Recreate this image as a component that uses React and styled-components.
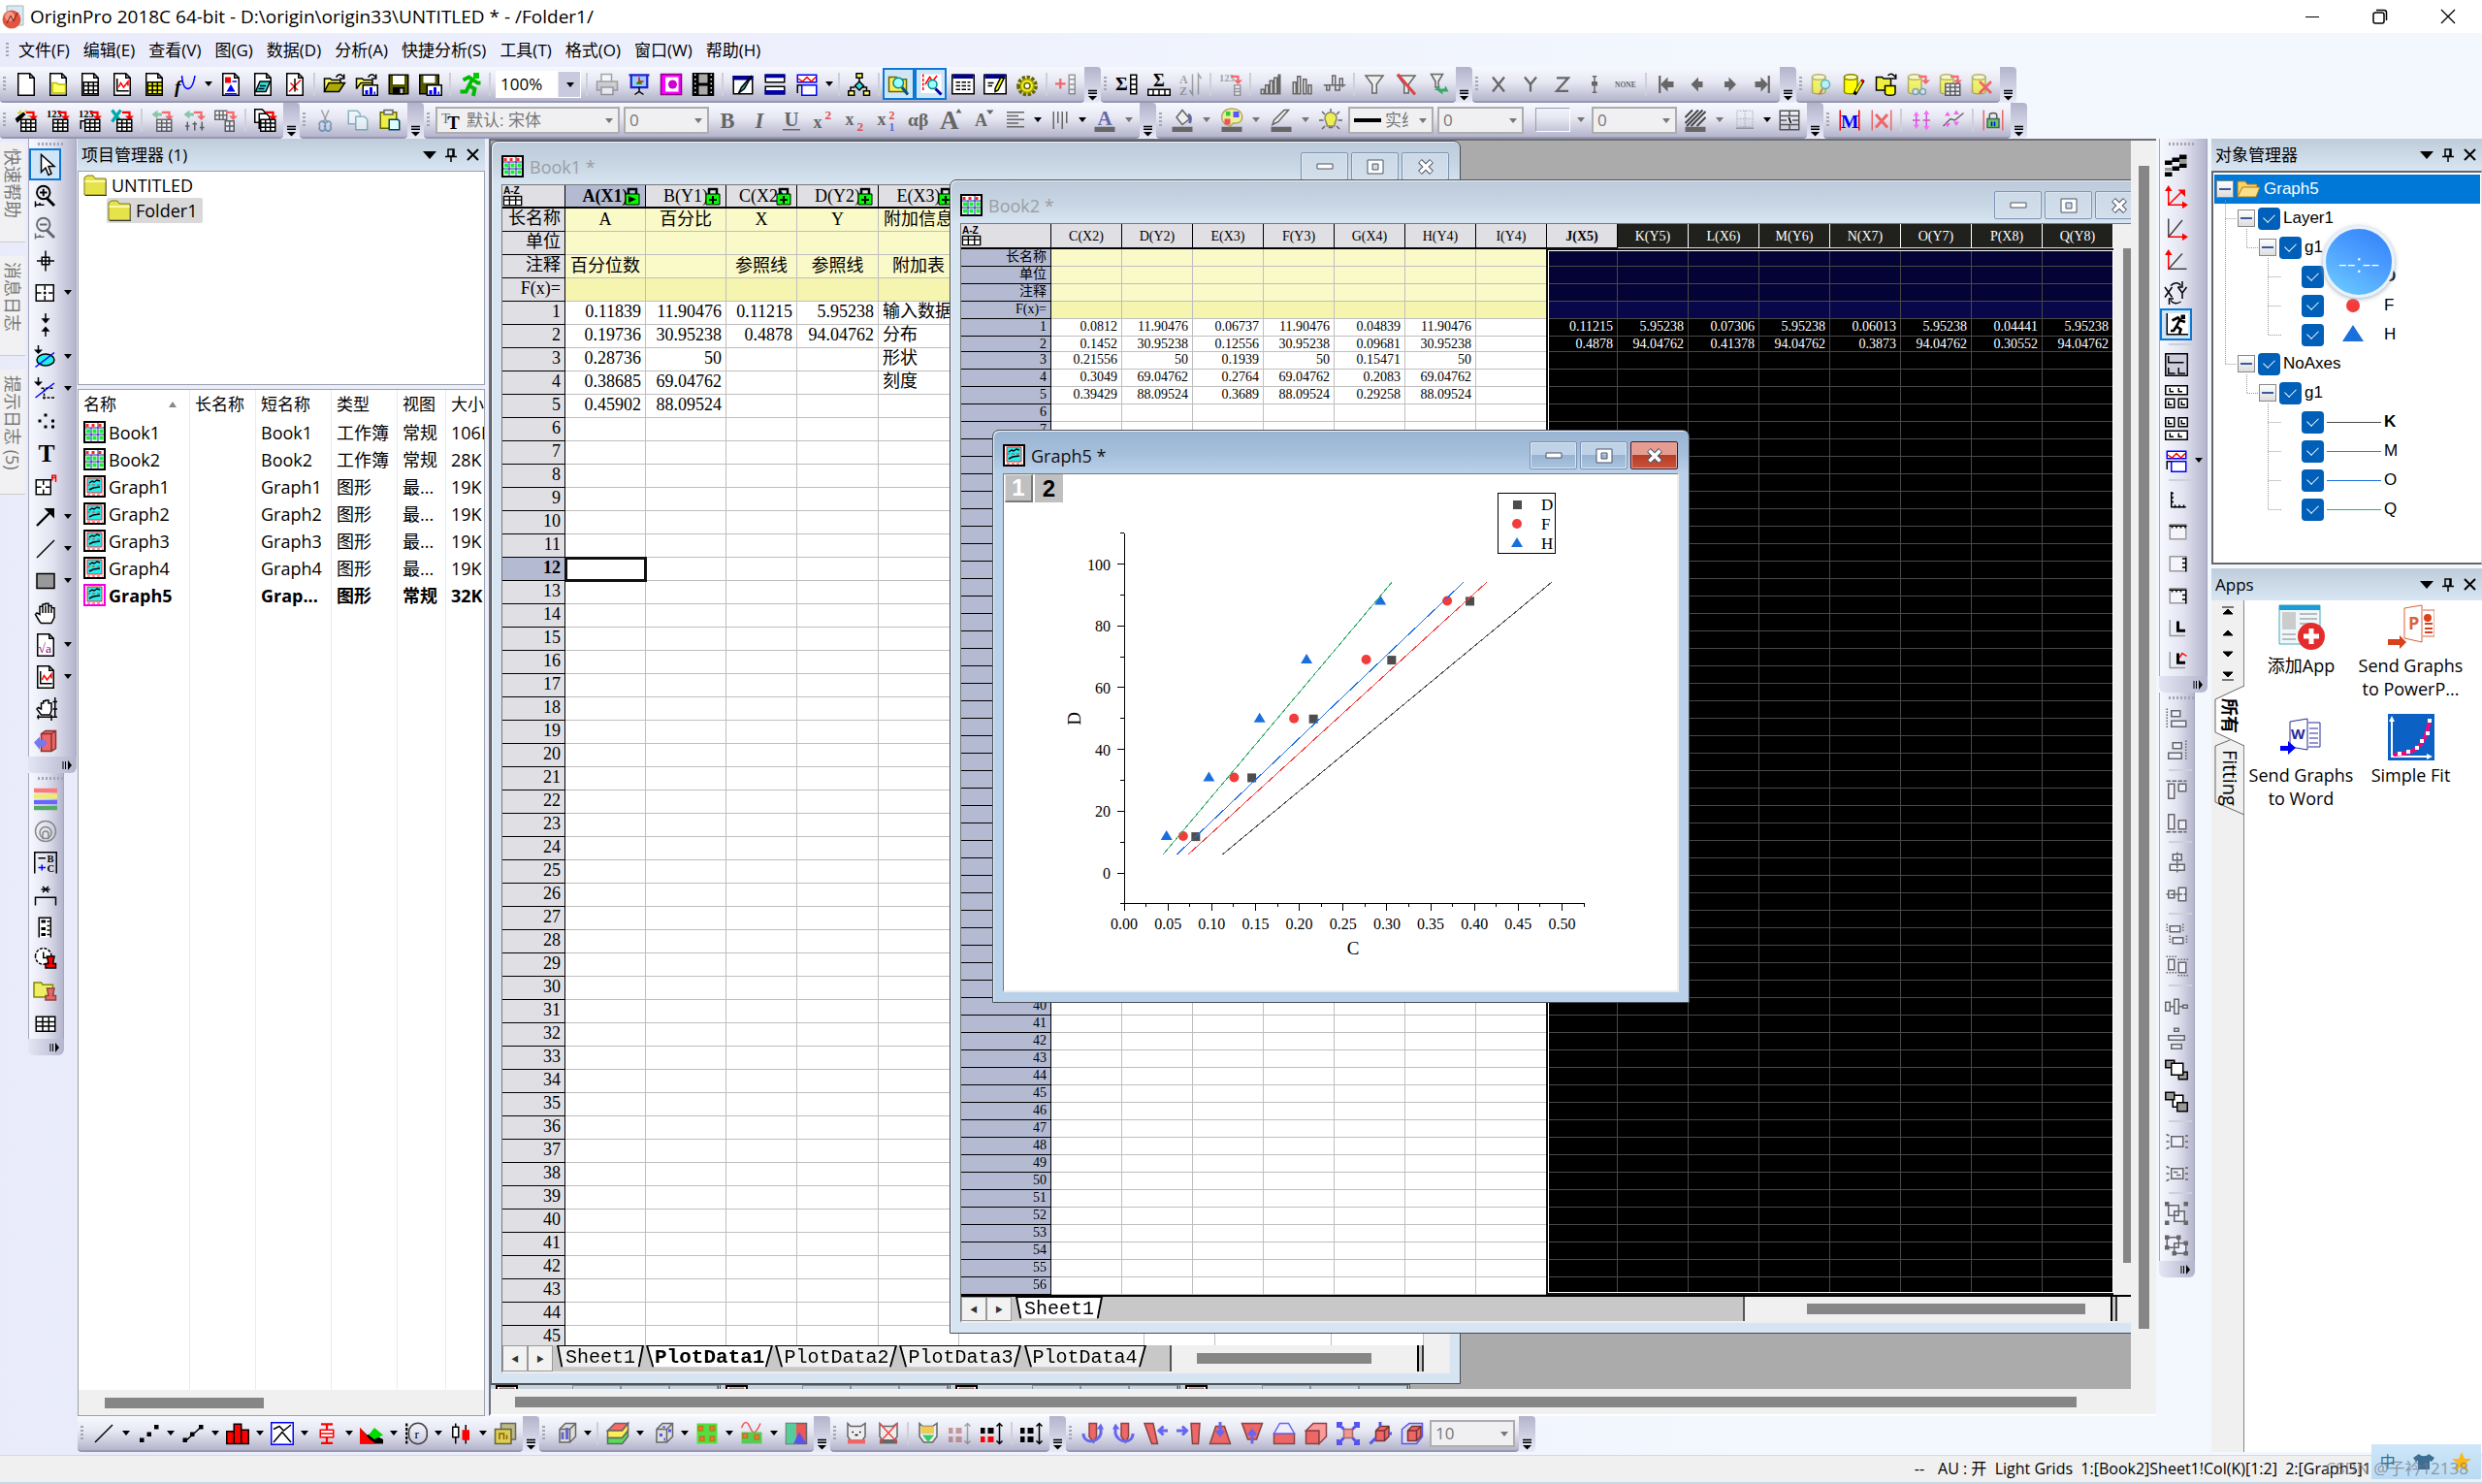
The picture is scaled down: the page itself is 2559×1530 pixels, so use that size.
import React, { useState } from "react"
import styled, { createGlobalStyle, css } from "styled-components"

const ui = `"Open Sans", "Noto Sans CJK SC", sans-serif`
const song = `"Liberation Serif", "Noto Sans CJK SC", serif`

const GlobalStyle = createGlobalStyle`
  * {
    box-sizing: border-box;
  }
  body {
    margin: 0;
    font: 18px/24px ${ui};
    color: #000;
  }
  button, select, input {
    font: inherit;
    color: inherit;
    margin: 0;
    padding: 0;
  }
  button {
    border: 0;
    background: none;
  }
  table {
    border-spacing: 0;
  }
  th, td {
    padding: 0;
  }
`

/* ---------- icons, drawn on a 16 x 16 grid ---------- */

const K = "#000"
const R = "#f00"
const B = "#00f"
const Y = "#ff0"
const G = "#666"
const page = ["M2.5.5h8l3 3v12h-11z", K, "#fff"]
const fold = ["M10.5.5v3h3", K]
const grid = ["M4.5 7.5h10v8h-10zM4.5 10h10M4.5 12.8h10M7.8 7.5v8M11.2 7.5v8", K, "#fff"]
const redArrow = ["M8 2.5h5v3", R, "none", 1.5]
const redHead = ["M10 5h6l-3 3z", "none", R]
const axes = ["M4.5 4v8.5h8", K]
const wave = ["M5.500 10l1.500-3 2 3 3-4v3", R]
const cylinder = ["M1 3v10c0 2 9 2 9 0V3z", "#880", Y]
const cylinderTop = ["M1 3c0-2.500 9-2.500 9 0s-9 2.500-9 0z", "#880", "#ffa"]
const folder = ["M1 13V3h5l1 1.500h6V13z", "#660", "#fe5"]
const text = (t, x, y, size, fill = K, style = "normal", weight = 700) => ({
  t, x, y, size, fill, style, weight,
})
const smallPlot = ["M5.500 8.500h10v7h-10z", K, "#fff"]
const smallBars = ["M7 15v-3h2v3zM10 15v-5h2v5zM13 15v-2h1v2z", "none", B]
const dog = ["M2 1l2 2h7l3-2v9l-3 4H5l-3-4z", G, "#eee"]
const cube = ["M4 5l4-4h7v9l-4 4H4zM4 5h7v9M11 5l4-4", G, "#ddd"]
const cubeRed = ["M5 6l3-3h6v7l-3 3H5zM5 6h6v7M11 6l3-3", "#733", "#e66"]
const rotorDown = ["M6 1h5v9l-2 4-3-4z", "#844", "#e66"]
const frameL = ["M4.500 2v10.500h10", K]
const ghostBox = ["M3.500 2.500h11v10h-11z", "#999", "#f4f4fa"]

const ICONS = {
  newProject: [page, fold],
  newFolder: [page, fold, ["M4 7h3l1 1h5v6H4z", "#bb0", "#ff6"]],
  newBook: [page, fold, ["M3.500 6.500h10v8h-10zM3.500 9h10M3.500 12h10M6.800 6.500v8M10.200 6.500v8", K]],
  newGraph: [page, fold, axes, wave],
  newMatrix: [page, fold, ["M3.500 6.500h10v8h-10zM3.500 9h10M3.500 12h10M6.800 6.500v8M10.200 6.500v8", K, Y]],
  newFunction: [["M5 2c1 12 7 12 9 0", B], text("f", 0, 14, 13, K, "italic")],
  newLayout: [page, fold, ["M4 3h4v4H4z", "none", R], ["M5 13l3-5 3 5z", "none", B], ["M9 6h3M4 14.500h8", B]],
  newNotes: [page, fold, ["M6 6h7l-3 7H3z", K, "#3dd"], ["M6 9h4M5 11h4", K]],
  newDigit: [page, fold, ["M4 13l8-8M5 7l5 5", R], ["M8 4v9", K]],
  open: [["M1 13V4h4l1 1h6v3", K, "#ff6"], ["M1 13l3-6h11l-4 6z", K, "#aa0"], ["M9 3c2-3 4-2 5 0M14.500 1v3h-3", K]],
  openTemplate: [["M1 11V4h4l1 1h6v3", K, "#ff6"], ["M1 11l3-4h8", K, "#ff6"], ["M9 3c2-3 4-2 5 0M14.500 1v3h-3", K], smallPlot, smallBars],
  save: [["M1.500 1.500h13v13h-13z", K, "#550"], ["M4 2h8v6H4z", "none", "#fff"], ["M4 10h8v5H4z", "none", K], ["M9 11h2v3H9z", "none", "#ccc"]],
  saveTemplate: [["M.500 1.500h13v13h-13z", K, "#550"], ["M3 2h8v5H3z", "none", "#fff"], smallPlot, smallBars],
  run: [["M10 0h4v4h-4z", "none", "#0c0"], ["M3 5l4-2 3 2 3 2h2M9 5l-2 4 4 2-1 5M7 9l-2 4H1", "#0b0", "none", 2.600]],
  print: [["M4 6V1h7v5", G, "#fff"], ["M1 6h14v6H1z", G, "#bbb"], ["M4 10h8v5H4z", G, "#fff"], ["M12 8h1", Y]],
  slide: [["M1 1.500h14M2.500 2v8h11V2", "#22c", "#9cf", 1.500], ["M8 10v3M5 15l3-2 3 2", K], ["M6 8a2 2 0 1 1 4 0z", "none", "#0a0"], ["M8 3v3h3", R]],
  record: [["M1 1h14v14H1z", "#808", "#f0f"], ["M4 3h9v10H4z", "none", "#fff"], ["M6 8a3 3 0 1 0 6 0 3 3 0 1 0-6 0", "none", "#c0c"]],
  film: [["M1 .5h14v15H1z", K, K], ["M5 1h6v6H5zM5 9h6v6H5z", "none", "#aaa"], ["M2.500 1v15M13.500 1v15", "#fff", "none", 1, "1 2"]],
  codeBuilder: [["M1.500 2.500h13v12h-13z", K, "#fff"], ["M1 2h14v3H1z", "none", "#008"], ["M14 2L7 10l-2 4 4-3z", K, "#3aa"]],
  command: [["M1.500 1.500h13v5h-13zM1.500 9.500h13v5h-13z", K, "#fff"], ["M1 1h14v2.500H1zM1 12h14v3H1z", "none", "#00a"]],
  cascade: [["M1.500 1.500h13v5h-13z", B, "#fff"], ["M2 4l3 2 3-3 3 3 3-3", R], ["M1.500 14V8.500h8", K], ["M4.500 8.500h10v7h-10z", B, "#fff"]],
  explorer: [["M6 .5h4v3H6zM.5 12.500h4v3h-4zM11 12.500h4v3h-4z", K, "#ff6"], ["M8 4v3M2 12v-2h3M13 12v-2h-3", K], ["M8 6l3 3-3 3-3-3z", K, "#3dd"]],
  findFolder: [folder, ["M4 7a3.500 3.500 0 1 0 7 0 3.500 3.500 0 1 0-7 0", "#088", "#9ff"], ["M10 10l4 5", "#058", "none", 2]],
  findGraph: [["M1 1h14v13H1z", "none", "#fff"], ["M2.500 1v12", R, "none", 1, "2 1"], ["M4 8l3-5 2 3 3-4", R], ["M6 8a3 3 0 1 0 6 0 3 3 0 1 0-6 0", "#088", "#9ff"], ["M11 11l4 4", "#00a", "none", 2]],
  results: [["M.5 1.500h15v13H.5z", K, "#fff"], ["M1 1h14v3H1z", "none", "#008"], ["M3 6.500h10M3 9h10M3 11.500h10", K, "none", 1, "3 1"]],
  script: [["M.5 1.500h15v13H.5z", K, "#fff"], ["M1 1h14v3H1z", "none", "#008"], ["M14 4l-4 8-2 1V11l4-8z", K, Y], ["M3 7h4M3 9h3", K]],
  gear: [["M2.500 9a5.500 5.500 0 1 0 11 0 5.500 5.500 0 1 0-11 0", "#660", "#dd2", 3.500, "2 1"], ["M3.500 9a4.500 4.500 0 1 0 9 0 4.500 4.500 0 1 0-9 0", "#aa0", "#ee2"], ["M6 9a2 2 0 1 0 4 0 2 2 0 1 0-4 0", "#660", "#fff"]],
  addColumn: [["M0 7.500h7M3.500 4v7", R, "none", 1.500], ["M9.500 1.500h4v13h-4zM9.500 4.500h4M9.500 8h4M9.500 11.500h4", "#555", "#fff"]],
  statColumn: [text("Σ", 0, 12, 13), ["M10.500 1.500h4v13h-4zM10.500 4.500h4M10.500 8h4M10.500 11.500h4", K, "#fff"]],
  statRow: [text("Σ", 4, 9, 12), ["M.5 11.500h15v4H.5zM4 11.500v4M8 11.500v4M12 11.500v4", K, "#fff"]],
  sort: [text("A", 0, 7, 8, G), text("Z", 0, 15, 8, G), ["M9 1v14l-2-3M13 15V1l2 3", G]],
  setValues: [text("123", 0, 6, 7, G), redArrow, redHead, ["M10.500 8.500h4v7h-4zM10.500 11h4M10.500 13h4", G, "#fff"]],
  histogram: [["M1.500 14.500v-3h2v3zM4.500 14.500v-6h2v6zM7.500 14.500v-9h2v9zM10.500 14.500v-11h2v11zM13.500 14.500v-13h1v13z", G, "#ddd"]],
  histogram2: [["M1.500 14.500v-8h2v8zM4.500 14.500v-12h2v12zM8.500 14.500v-10h2v10zM12 14.500v-6h2v6z", G, "#ddd"]],
  histogram3: [["M.5 8.500h15M2.500 8v4h2V8M6.500 8V2h2v10h3V4h2v6", G]],
  filter: [["M2 2h12l-4.500 6v6h-3V8z", G, "#eee"]],
  filterOff: [["M2 2h12l-4.500 6v6h-3V8z", G, "#eee"], ["M2 1l12 14", "#d44", "none", 2]],
  filterRun: [["M3 1h8L8 6v4H6V6z", G, "#eee"], ["M5 12l4-3v2h3l1-2 2 4h-4v2l-4-3", "none", "#3a6"]],
  colX: [["M4 3l8 10M12 3L4 13", G, "none", 1.500]],
  colY: [["M4 3l4 5 4-5M8 8v5", G, "none", 1.500]],
  colZ: [["M4 3.500h8l-8 9h8", G, "none", 1.500]],
  colErr: [["M8 2v12M6.500 2.500h3M6.500 13.500h3", G], ["M6 6h4v3H6z", "none", G]],
  colNone: [text("NONE", 0, 10, 5, G)],
  toFirst: [["M3.500 2v12", G, "none", 1.500], ["M4 8l5-5v10zM9 6h4v4H9z", "none", G]],
  toLeft: [["M3 8l5-5v10zM8 6h3v4H8z", "none", G]],
  toRight: [["M12 8L7 3v10zM7 6H4v4h3z", "none", G]],
  toLast: [["M12.500 2v12", G, "none", 1.500], ["M12 8L7 3v10zM7 6H3v4h4z", "none", G]],
  dbFind: [cylinder, cylinderTop, ["M7 8a3 3 0 1 0 6 0 3 3 0 1 0-6 0", "#088", "#9ff"], ["M8 11l-2 4", "#a44", "none", 1.500]],
  dbEdit: [cylinder, cylinderTop, ["M14 5l-5 8-1 2", K, "none", 2.500], ["M13 6l-4 7", Y, "none", 1.500], ["M13 5l1 1", R, "none", 2]],
  dbOpen: [["M1 12V3h4l1 1h5v8z", K, "#ee4"], ["M9 2c2-2 4-1 5 1M14.500 1v3h-3", K], ["M7 9v5c0 2 7 2 7 0V9z", K, Y]],
  dbPreview: [cylinder, cylinderTop, redArrow, redHead, ["M4 13a2 2 0 1 0 4 0 2 2 0 1 0-4 0M9 13a2 2 0 1 0 4 0 2 2 0 1 0-4 0", "#478", "#cff"]],
  dbImport: [cylinder, cylinderTop, redArrow, redHead, grid],
  dbRemove: [cylinder, cylinderTop, ["M6 6l8 8M14 6l-8 8", R, "none", 1.800]],
  wizard: [["M1 7l5-4 1 1-5 5z", K, K], ["M4 1v2M8 1L7 3M9 5h2M2 3h2", "#cc0"], redArrow, redHead, grid],
  importOne: [text("123", 0, 6, 7), redArrow, redHead, grid],
  importMany: [text("123", 0, 6, 7), redArrow, redHead, ["M1.500 14V8.500h4", K], grid],
  importExcel: [["M1 1l6 8M7 1L1 9", "#0aa", "none", 2.200], redArrow, redHead, grid],
  reimport: [["M1 4l4-3v2h3v2H5v2z", "none", "#3a6"], redArrow, redHead, grid],
  reimportOpts: [["M1 4l4-3v2h3v2H5v2z", "none", "#3a6"], redArrow, redHead, ["M3.500 9v6M8.500 9v6M13.500 9v6M2 12h3M7 10.500h3M12 13h3", K]],
  reimportSheet: [["M.5 1.500h8v6h-8zM.5 4.500h8M3.500 1.500v6M6 1.500v6", K, "#fff"], redArrow, redHead, ["M7.500 8.500h6v7h-6zM7.500 12h6M10.500 8.500v7", K, "#fff"]],
  batch: [["M.5.5h5l2 2v7h-7z", K, "#fff"], ["M3.500 3.500h5l2 2v8h-7z", K, "#fff"], redArrow, redHead, grid],
  cut: [["M5 1l4 9M10 1L6 10", G], ["M4 12a2 2 0 1 0 3 0 2 2 0 1 0-3 0M8 12a2 2 0 1 0 3 0 2 2 0 1 0-3 0", "#269"]],
  copy: [["M1.500 1.500h6l2 2v7h-8z", "#489", "#eff"], ["M6.500 5.500h6l2 2v7h-8z", "#489", "#eff"]],
  paste: [["M1.500 2.500h11v11h-11z", "#660", "#ee4"], ["M4 1h6v3H4z", G, "#eee"], ["M7.500 7.500h6l1 1v6h-7z", "#045", "#dff"]],
  bold: [text("B", 3, 13, 15, G)],
  italic: [text("I", 5, 13, 15, G, "italic")],
  underline: [text("U", 3, 12, 14, G), ["M2 14.500h12", G]],
  sup: [text("x", 1, 13, 12, G), text("2", 9, 7, 9, "#d55")],
  sub: [text("x", 1, 11, 12, G), text("2", 9, 15, 9, "#d55")],
  supsub: [text("x", 1, 11, 12, G), text("2", 9, 7, 8, "#d55"), text("1", 9, 15, 8, "#66d")],
  greek: [text("αβ", 0, 12, 13, G)],
  bigger: [text("A", 0, 14, 18, G), ["M11 3l2-3 2 3z", "none", G]],
  smaller: [text("A", 2, 12, 12, G), ["M10 1h5l-2.500 3z", "none", G]],
  align: [["M2 2.500h12M2 5h8M2 7.500h12M2 10h8M2 12.500h12", G]],
  valign: [["M3.500 2v12M6.500 2v8M9.500 2v12M12.500 2v8", G]],
  fontColor: [text("A", 3, 11, 14, "#66a"), ["M1 12.500h14V16H1z", "none", G]],
  bucket: [["M4 6l4-5 5 6-5 4z", G, "#eee"], ["M12 4c2 1 2 3 1 6", "#66a", "none", 2], ["M1 12.500h14V16H1z", "none", G]],
  palette: [["M8 0c9 0 9 10 3 10H9l-2 2C-1 11-1 0 8 0z", "#aa6", "#ee9"], ["M4 2h3v3H4z", "none", "#3c3"], ["M9 2h4v4H9z", "none", "#55f"], ["M3 7h4v4H3z", "none", "#e55"], ["M1 12.500h14V16H1z", "none", G]],
  pen: [["M13 1L6 9l-4 2 1-3 7-7z", G, "#eee"], ["M1 12.500h14V16H1z", "none", G]],
  light: [["M4 6.500a4 4 0 1 1 8 0c0 2-1.500 3-1.500 5.500h-5c0-2.500-1.500-3.500-1.500-5.500z", "#886", "#ee5"], ["M8 0v2M2 2l2 2M14 2l-2 2M0 8h3M13 8h3M2 14l2-2M14 14l-2-2M6.500 13h3", G]],
  hatch: [["M1 6l5-5M1 10l9-9M2 12L13 1M5 12L15 2M9 12l6-6", "#444", "none", 1.300], ["M1 12.500h14V16H1z", "none", G]],
  borders: [["M2.500 1.500h11v11h-11zM8 1.500v11M2.500 7h11", "#999", "none", 1, "1 1"], ["M2 13.500h12", G]],
  merge: [["M1.500 1.500h13v13h-13zM1.500 5h13M1.500 11h13M8 1.500V5M8 11v3.500M2 8h4M10 8h4", "#555"], ["M7.500 6l1.500 4", K]],
  maskM: [["M1.500 1v14M14.500 1v14", R], text("M", 2, 13, 13, B)],
  maskX: [["M1.500 1v14M14.500 1v14", "#e66"], ["M4 4l8 9M12 4l-8 9", "#e66", "none", 2]],
  moveV: [["M4.500 4v8M11.500 2v12M2 8h5M9 8h5", "#c5c"], ["M2.500 5l2-3 2 3zM2.500 11l2 3 2-3zM9.500 4l2-3 2 3zM9.500 12l2 3 2-3z", "none", "#f6f"]],
  moveH: [["M1 12l5-5 3 1 6-5", G], ["M2 5l2-3 2 3zM2 10l2 3 2-3zM8 4l2-3 2 3zM8 9l2 3 2-3z", "none", "#e6e"]],
  lockScale: [["M1.500 1v14M14.500 1v14", "#e66"], ["M5.500 8V4.500c0-2 5-2 5 0V8", "#555"], ["M4 7h8v6H4z", "#465", "#6c6"], ["M7 9v3M9 9v3", B]],
  pointer: [["M5 1v12l3-3 2 5 2-1-2-5h4z", K, "#fff"]],
  zoomIn: [["M2 5a4.500 4.500 0 1 0 9 0 4.500 4.500 0 1 0-9 0M4 5h5M6.500 2.500v5", K, "none", 1.300], ["M9 9l5 5", K, "none", 2], ["M1 11v4M1 13.500h6M4 12v2", K]],
  zoomOut: [["M2 5a4.500 4.500 0 1 0 9 0 4.500 4.500 0 1 0-9 0M4 5h5", K, "none", 1.300], ["M9 9l5 5", K, "none", 2], ["M1 11v4M1 13.500h6M4 12v2", K]],
  reader: [["M8 1v14M2 8h12", K], ["M5.500 5.500h5v5h-5z", K]],
  selector: [["M1.500 2.500h12v11h-12z", K, "#fff"], ["M7.500 3v3M7.500 10v3M2 8h3M10 8h3M6.500 8h2M7.500 7v2", K]],
  dataSelect: [["M8 0v5M8 16v-5", K], ["M5 3.500h6L8 7zM5 12.500h6L8 9z", "none", K]],
  maskOval: [["M3 0v5", K], ["M0 3h6L3 6z", "none", K], ["M2 10a6 4 0 1 0 12 0 6 4 0 1 0-12 0", K, "#2ee"], ["M1 15L14 5", B]],
  maskDots: [["M3 0v5", K], ["M0 3h6L3 6z", "none", K], ["M5 7.500h8M6 14h8M7 8v7", K, "none", 1, "2 1"], ["M1 14L14 4", B]],
  drawDots: [["M7 3h2v2H7zM3 7h2v2H3zM12 7h2v2h-2zM12 11h2v2h-2zM7 11h2v2H7z", "none", K]],
  textTool: [text("T", 3, 14, 17)],
  region: [["M1.500 4.500h10v10h-10z", K, "#fff"], ["M6.500 5v3M6.500 11v3M2 9.500h3M8 9.500h3", K], ["M13 3h2v3M12.500 5V1.500H15V5", R]],
  arrow: [["M2 14L11 5", K, "none", 1.500], ["M7 2h7v7z", "none", K]],
  line: [["M2 14L14 2", K]],
  rect: [["M2 3h12v10H2z", K, "#999"]],
  hand: [["M4 14l-3-5 1-1 2 1V3.500h2V2h2V1.500h2V3h2v1.500h2V11l-2 4H5z", K, "#fff"], ["M6 4v4M8 3v5M10 3v5M12 5v3", K]],
  formula: [page, fold, text("√a", 3, 13, 9, "#808", "normal", 400)],
  graphObj: [page, fold, axes, wave],
  handAxes: [["M5 12l-3-4 1-1 2 1V4h1.500V2.500H8V2h2v2h2v5l-1 3z", K, "#fff"], ["M14.500 0v13M2 13.500h14M3 12v3M12 12v4M13 3h3M13 8h3", K]],
  cube: [["M5 3l3-2h7v12l-3 2H5zM5 3h7v12M12 3l3-2", "#833", "#e66"], ["M0 9l4-4v2h3l2 2-2 3H4v2z", "none", "#77e"]],
  colorBands: [["M0 2h16", "#f77", "none", 3], ["M0 6h16", "#ee6", "none", 3], ["M0 10h16", "#66f", "none", 3], ["M0 14h16", "#5a6", "none", 3]],
  swirl: [["M1 8a7 7 0 1 1 14 0 7 7 0 1 1-14 0M4 9a4 4 0 1 1 8 0 4 4 0 1 1-8 0M6 10a2 2 0 1 1 4 0v3H6z", "#888"]],
  legend: [["M.5 15V.5h15V15", K], ["M3 4.500h5", K], ["M3 11h5M5.500 9v4", B], text("B", 9, 7, 7), text("C", 9, 14, 7)],
  bracket: [["M1 15V9.500h14V15", K], ["M5 4h6M6 2l4 4M10 2L6 6", K]],
  ruler: [["M3.500 15V1.500h8V15", K, "#fff"], ["M9 4h2M9 7h2M9 10h2M9 13h2", K], ["M5 3h3v2H5zM5 8h3v2H5zM5 12h3v2H5z", "none", K]],
  stampClock: [["M1 6a5.500 5.500 0 1 1 11 0 5.500 5.500 0 1 1-11 0", K, "#fff", 1, "2 1"], ["M6.500 3v4h3", K], ["M9 6h5l-1 5h2v3H8v-3h2z", K, R]],
  stampFolder: [["M0 12V2h5l1 1.500h7V12z", "#880", "#ee6"], ["M9 6h5l-1 5h2v3H8v-3h2z", "#844", "#e66"]],
  table: [["M1.500 3.500h13v10h-13zM1.500 7h13M1.500 10h13M6 3.500v10M10.200 3.500v10", K, "#fff"]],
  checker: [["M0 5h5v3H0zM5 3h5v3H5zM10 1h5v3h-5zM10 7h5v3h-5zM5 9h5v3H5zM0 13h5v3H0z", "none", K], ["M10 4h5v3h-5zM0 10h5v2H0z", "none", "#999"]],
  axisXYZ: [["M2.500 14V2M2 13.500h12M3 13l9-9", R], ["M0 4l2.500-4L5 4zM12 11l4 2.500-4 2.500zM9 3h5v5z", "none", R]],
  axisX: [["M2.500 14V1M3 13l9-11", "#444"], ["M2 13.500h12", R], ["M12 11l4 2.500-4 2.500z", "none", R]],
  axisY: [["M2 13.500h13M3 13l9-10", "#444"], ["M2.500 14V2", R], ["M0 4l2.500-4L5 4z", "none", R]],
  swapXY: [["M0 4l5 7M5 4l-5 7M9 4l3 4 3-4M12 8v4", K], ["M4 3c3-3 6-2 7 0M12 0v4H9M11 14c-3 2-6 1-7-1M3 16v-4h3", K]],
  runGraph: [["M2 0h14v14H2z", "none", "#fff"], ["M1.500 0v14.500H16", K], ["M11 1h3v3h-3z", "none", K], ["M5 5l4-2 2 2 3 1M10 5L8 9l3 2-1 3M8 9l-2 3H4", K, "none", 1.800]],
  layer1: [["M.5.5h15v15H.5z", K, "#ccd"], ["M2.500 2v4.500H13M2.500 10v4H7M9.500 10v4H14", K]],
  layer4: [["M.5.5h15v6H.5zM.5 9.500h6v6h-6zM9.500 9.500h6v6h-6z", K, "#fff"], ["M3.500 2v2.500H6M9.500 2v2.500H12M2.500 11v2.500H5M11.500 11v2.500H14", K]],
  layer4b: [["M.5 9.500h15v6H.5zM.5.500h6v6h-6zM9.500.500h6v6h-6z", K, "#fff"], ["M3.500 11v2.500H6M9.500 11v2.500H12M2.500 2v2.500H5M11.500 2v2.500H14", K]],
  frameBL: [frameL, ["M6 3H4M6 6H4M6 9H4M7 11v2M10 11v2M13 11v2", K]],
  frameT: [ghostBox, ["M3 3.500h12M5 3v2M8 3v2M11 3v2M14 3v2", K]],
  frameR: [ghostBox, ["M14.500 3v10M12 4h2M12 7h2M12 10h2", K]],
  frameAll: [ghostBox, ["M14.500 3v10M3 3.500h12M5 3v2M8 3v2M11 3v2M12 7h2M12 10h2", K]],
  inset: [["M3.500 2v11H14", "#999"], ["M9 3v6.500h5", K, "none", 2]],
  insetData: [["M3.500 2v11H14", "#999"], ["M9 3v6.500h5", K, "none", 2], ["M10 6l2-3 3 2", R]],
  alignL: [["M1.500 1v14", G, "none", 1, "1 1"], ["M4.500 2.500h6v4h-6zM4.500 9.500h10v4h-10z", G, "#eef"]],
  alignR: [["M14.500 1v14", G, "none", 1, "1 1"], ["M5.500 2.500h6v4h-6zM2.500 9.500h9v4h-9z", G, "#eef"]],
  alignT: [["M1 1.500h14", G, "none", 1, "3 1"], ["M2.500 3.500h4v10h-4zM9.500 3.500h5v5h-5z", G, "#eef"]],
  alignB: [["M1 14.500h14", G, "none", 1, "3 1"], ["M2.500 2.500h4v10h-4zM9.500 6.500h5v6h-5z", G, "#eef"]],
  centerV: [["M5.500 2.500h6v4h-6zM3.500 9.500h10v4h-10z", G, "#eef"], ["M8.500 1v14", G, "none", 1, "2 1"]],
  centerH: [["M2.500 5.500h4v5h-4zM9.500 3.500h5v9h-5z", G, "#eef"], ["M1 8h15", G, "none", 1, "2 1"]],
  sameW: [["M3.500 2.500h7v4h-7zM5.500 10.500h7v4h-7z", G, "#eef"], ["M1.500 1v6M12.500 1v6M3.500 9v6M15 9v6", G, "none", 1, "1 1"]],
  sameH: [["M2.500 3.500h4v7h-4zM9.500 5.500h5v7h-5z", G, "#eef"], ["M1 1.500h7M1 12.500h7M9 3.500h7M9 14.500h7", G, "none", 1, "1 1"]],
  distH: [["M.5 5.500h3v6h-3zM6.500 3.500h3v10h-3zM12.500 7.500h3v2h-3zM4 8.500h2M10 8.500h2", G, "#eef"]],
  distV: [["M6.500 1.500h3v2h-3zM2.500 6.500h11v3h-11zM4.500 12.500h7v3h-7z", G, "#eef"]],
  front: [["M.5 1.500h6v5h-6zM9.500 9.500h6v5h-6z", K, "#999"], ["M4.500 3.500h8v8h-8z", K, "#fff"]],
  back: [["M5.500 3.500h7v8h-7z", K, "#fff"], ["M.5 1.500h6v5h-6zM8.500 8.500h7v6h-7z", K, "#999"]],
  selOne: [["M4.500 4.500h8v7h-8z", G, "#eef"], ["M1 3l2 1M1 13l2-1M1 8h2M14 4h2M14 8h2M14 12h2", G]],
  selNum: [["M4.500 4.500h8v7h-8z", G, "#eef"], ["M6 7h3M8 9h3", G], ["M1 3l2 1M1 13l2-1M1 8h2M14 4h2M14 8h2M14 12h2", G]],
  group: [["M2.500 2.500h7v7h-7zM6.500 6.500h7v7h-7z", G, "#eef"], ["M0 0h3v3H0zM13 0h3v3h-3zM0 13h3v3H0zM13 13h3v3h-3z", "none", G]],
  ungroup: [["M1.500 2.500h8v7h-8zM6.500 6.500h8v7h-8z", G, "#eef"], ["M0 1h3v3H0zM8 1h3v3H8zM0 8h3v3H0zM13 12h3v3h-3zM13 5h3v3h-3zM5 12h3v3H5z", "none", G]],
  scatter: [["M2 11h3v3H2zM7 7h3v3H7zM12 2h3v3h-3z", "none", K]],
  lineSymbol: [["M3 13L13 4", K], ["M1 11h3v3H1zM6 7h3v3H6zM12 2h3v3h-3z", "none", K]],
  column: [["M.5 15V6.500h5V1.500h5V5.500h5V15z", K, R], ["M5.500 15V6M10.500 15V5", K]],
  multiPanel: [["M.5.5h15v15H.5z", B, "#fff"], ["M2 14L8 7l6 7M2 5l4-2 3 3 5-4", K]],
  box: [["M4 1.500h8M4 14.500h8M8 1.500V15", R, "none", 1.500], ["M3.500 5.500h9v5h-9zM3.500 8h9", R, "#fff"]],
  area: [["M0 15V4l5 5 3-1 8 4v3z", "none", K], ["M0 4l7 8 4 3H0z", "none", R], ["M6 9l4-5 6 5-6 3z", "none", "#0d0"]],
  polar: [["M1.500 1v14", K, "none", 1.500, "2 1"], ["M3 8a6.300 6.300 0 1 1 12.500 0 6.300 6.300 0 1 1-12.500 0", "#444"], text("r", 7, 11, 9, K, "normal", 400)],
  stock: [["M4.500 1v14M11.500 2v13", K], ["M2.500 3.500h4v7h-4z", K, "#fff"], ["M9.500 6h4v6h-4z", R, R]],
  template: [["M5 1h10v11H5z", G, "#bb8"], ["M1 5h11v10H1z", "#663", "#dc5"], ["M4 12V8h3v4M9 12V9", "#860"]],
  bars3d: [cube, ["M6 12V7M9 12V4", "#66c", "none", 2]],
  surface3d: [["M1 6l5-5h9l-4 5z", G, "#f66"], ["M1 6h10l4-5v5l-4 5H1z", G, "#fe5"], ["M1 11h10l4-5v4l-4 5H1z", G, "#5d5"]],
  scatter3d: [cube, ["M6 8h2v2H6zM9 11h1v2H9zM12 5h2v2h-2zM8 3h2v1H8z", "none", "#55e"]],
  contour: [["M1 1h14v14H1z", "none", "#5d4"], ["M2 3h3v3H2zM10 3h3v3h-3zM3 10h3v3H3zM10 10h3v3h-3z", "#a80", "#f66"]],
  profile: [["M1 4c2-5 4-5 6 0s4 4 7-3", "#e55"], ["M1 7h14v8H1z", "none", "#5c5"], ["M2 8h3v3H2zM10 9h3v3h-3z", "#a80", "#f66"]],
  image: [["M1 1h14v14H1z", G, "#e55"], ["M1 1h7v14H1z", "none", "#5c9"], ["M6 15l4-8 5 8z", "none", "#55e"]],
  maskDog: [dog, ["M5 7h1M10 7h1M7 9h2", K], ["M2 12h12v3H2z", "none", "#e66"]],
  maskDogX: [dog, ["M2 12h12v3H2z", "none", G], ["M2 1l12 13M14 1L2 14", "#e44"]],
  maskShow: [dog, ["M3 3h9v5H3z", "none", "#ec5"], ["M4 9l4 5 4-5z", "none", "#3c6"]],
  swap1: [["M0 4h3v4H0zM5 4h4v4H5zM0 10h3v4H0zM5 10h4v4H5z", "none", "#a55"], ["M13 1v14M11 3l2-2 2 2M11 13l2 2 2-2", G]],
  swap2: [["M0 4h3v4H0zM5 4h4v4H5z", "none", K], ["M0 10h3v4H0zM5 10h4v4H5z", "none", R], ["M13 1v14M11 3l2-2 2 2M11 13l2 2 2-2", K]],
  swap3: [["M0 4h3v4H0zM5 4h4v4H5zM0 10h3v4H0zM5 10h4v4H5z", "none", K], ["M13 1v14M11 3l2-2 2 2M11 13l2 2 2-2", K]],
  rotL: [rotorDown, ["M2 8c0 7 10 7 12 0V4", "#66e", "none", 2], ["M11 5l3-4 2 4z", "none", "#66e"]],
  rotR: [rotorDown, ["M14 8c0 7-10 7-12 0V4", "#66e", "none", 2], ["M0 5l2-4 3 4z", "none", "#66e"]],
  tiltL: [["M0 1h6l3 14H5z", "#844", "#e66"], ["M16 6h-6M13 3l-3 3 3 3", "#66e", "none", 2]],
  tiltR: [["M16 1h-6l1 14h4z", "#844", "#e66"], ["M0 6h6M4 3l3 3-3 3", "#66e", "none", 2]],
  tiltDown: [["M5 3h6l4 12H1z", "#844", "#e66"], ["M8 0v9M5.500 6L8 9l2.500-3", "#66e", "none", 2]],
  tiltUp: [["M1 1h14l-4 11H5z", "#844", "#e66"], ["M8 15V6M5.500 9L8 6l2.500 3", "#66e", "none", 2]],
  perspUp: [["M1 8h14v7H1z", "#844", "#e66"], ["M5 1h6l4 7H1z", "#66e", "#eef"]],
  perspDown: [["M1 6h9v9H1z", "#844", "#e66"], ["M1 6l5-5h9v9l-5 5V6z", "#844", "#f99"]],
  fit: [["M5 5h6v6H5z", "#a66", "#e99"], ["M1 1l4 4M15 1l-4 4M1 15l4-4M15 15l-4-4M1 4V1h3M12 1h3v3M1 12v3h3M12 15h3v-3", "#55e", "none", 2]],
  resetRot: [cubeRed, ["M1 15l4-4M8 0v3M14 8h2", "#55e", "none", 2]],
  resetAll: [["M1 5l5-4h9v9l-4 5H1z", "#55e", "#dde"], cubeRed],
}

const Svg = styled.svg`
  display: block;
  flex: none;
  overflow: visible;
  width: ${(p) => p.$size || 24}px;
  height: ${(p) => p.$size || 24}px;
  opacity: ${(p) => (p.$dim ? 0.55 : 1)};
`

const Icon = ({ name, dim, size }) => (
  <Svg viewBox="0 0 16 16" $dim={dim} $size={size} aria-hidden="true">
    {ICONS[name].map((s, i) =>
      Array.isArray(s) ? (
        <path key={i} d={s[0]} stroke={s[1]} fill={s[2] || "none"} strokeWidth={s[3] || 1} strokeDasharray={s[4]} />
      ) : (
        <text key={i} x={s.x} y={s.y} fontSize={s.size} fill={s.fill} fontStyle={s.style} fontWeight={s.weight} fontFamily="Liberation Serif">
          {s.t}
        </text>
      )
    )}
  </Svg>
)

/* ---------- shell ---------- */

const Shell = styled.div`
  display: flex;
  flex-direction: column;
  height: 100vh;
  overflow: hidden;
  background: linear-gradient(90deg, #e9ebfb, #f3f7fe 70%);
`

const TitleBar = styled.header`
  display: flex;
  align-items: center;
  height: 34px;
  flex: none;
  padding-left: 2px;
  background: #fff;
  h1 {
    flex: 1;
    margin: 0 0 0 6px;
    font-size: 19px;
    font-weight: 400;
  }
`

const CaptionButton = styled.button`
  display: flex;
  align-items: center;
  justify-content: center;
  width: 70px;
  height: 34px;
`

const MenuBar = styled.nav`
  display: flex;
  align-items: center;
  flex: none;
  height: 35px;
  padding-left: 3px;
  gap: 14px;
  font-size: 17px;
`

const MenuItem = styled.button`
  white-space: nowrap;
  &:first-of-type {
    margin-left: -8px;
  }
`

const Grip = styled.span`
  flex: none;
  ${(p) =>
    p.$across
      ? css`
          width: 28px;
          height: 3px;
          margin: 4px 0 3px 9px;
          background: repeating-linear-gradient(90deg, #a4a4b4 0 2px, transparent 2px 4px);
        `
      : css`
          width: 3px;
          height: 16px;
          margin: 0 4px 0 3px;
          background: repeating-linear-gradient(#a4a4b4 0 2px, transparent 2px 4px);
        `}
`

const BarRow = styled.div`
  display: flex;
  flex: none;
  height: 37px;
`

const Bar = styled.div`
  display: flex;
  align-items: center;
  height: 37px;
  padding-right: 2px;
  border-bottom: 2px solid #9797b2;
  border-radius: 0 0 4px 4px;
  background: linear-gradient(#f7f9ff, #e6e7f2 45%, #b4b4cc);
`

const Overflow = styled.button`
  display: flex;
  align-items: flex-end;
  justify-content: center;
  align-self: stretch;
  width: 17px;
  height: 37px;
  padding-bottom: 2px;
  border-radius: 0 4px 4px 0;
  background: linear-gradient(#b3b3cb, #e8eaf8);
`

const ToolButton = styled.button`
  display: flex;
  align-items: center;
  justify-content: center;
  flex: none;
  width: 33px;
  height: 33px;
  border: ${(p) => (p.$on ? "2px solid #0a78d4" : "0")};
  background: ${(p) => (p.$on ? "#cfe5f8" : "none")};
`

const Drop = styled.button`
  display: flex;
  align-items: center;
  justify-content: center;
  flex: none;
  width: ${(p) => p.$w || 13}px;
  height: 24px;
  &::after {
    content: "";
    border: 4px solid transparent;
    border-top: 5px solid ${(p) => (p.$dim ? "#777" : "#000")};
    border-bottom: 0;
  }
`

const Divider = styled.span`
  flex: none;
  ${(p) =>
    p.$across
      ? "width: 24px; height: 2px; margin: 3px 0 3px 9px;"
      : "width: 2px; height: 24px; margin: 0 3px;"}
  background: #cfcfda;
`

const Combo = styled.label`
  position: relative;
  display: flex;
  flex: none;
  width: ${(p) => p.$w}px;
  margin: 0 2px;
  select {
    appearance: none;
    width: 100%;
    height: 28px;
    padding: 0 24px 0 ${(p) => p.$pad || 4}px;
    border: ${(p) => (p.$live ? "1px solid #fff" : "2px solid #adadad")};
    border-radius: 0;
    background: ${(p) => (p.$live ? "linear-gradient(270deg, #c9cadd 22px, #fff 23px)" : "#f0f0f3")};
    color: ${(p) => (p.$live ? "#000" : "#777")};
    font-size: 17px;
    opacity: 1;
  }
  &::after {
    content: "";
    position: absolute;
    right: 7px;
    top: 12px;
    border: 4px solid transparent;
    border-top: 5px solid ${(p) => (p.$live ? "#000" : "#777")};
    border-bottom: 0;
    pointer-events: none;
  }
  svg {
    position: absolute;
    left: 6px;
    top: 4px;
    pointer-events: none;
  }
`

const ColorWell = styled.button`
  flex: none;
  width: 36px;
  height: 25px;
  margin: 0 2px 0 10px;
  border: 1px solid #9a9aae;
  border-color: #9a9aae #fff #fff #9a9aae;
`

const ComboBox = ({ w, label, value, live, pad, children }) => (
  <Combo $w={w} $live={live} $pad={pad}>
    {children}
    <select aria-label={label} disabled={!live} defaultValue={value}>
      <option>{value}</option>
    </select>
  </Combo>
)

const OverflowGlyph = () => (
  <svg width="9" height="12" viewBox="0 0 10 12" aria-hidden="true">
    <path d="M0 1h10M0 4h10" stroke="#000" strokeWidth="1.500" />
    <path d="M0 7h10l-5 5z" />
  </svg>
)

// "|" divider, "v" drop arrow, "V" wide drop arrow, "-name" disabled, "+name" pressed
const Tools = ({ items, across }) =>
  items.map((item, i) => {
    if (typeof item !== "string") return <React.Fragment key={i}>{item}</React.Fragment>
    if (item === "|") return <Divider key={i} $across={across} />
    if (item === "v") return <Drop key={i} aria-label="more" />
    if (item === "V") return <Drop key={i} $w={18} $dim aria-label="more" />
    const dim = item[0] === "-"
    const on = item[0] === "+"
    const name = dim || on ? item.slice(1) : item
    return (
      <ToolButton key={i} $on={on} aria-label={name}>
        <Icon name={name} dim={dim} />
      </ToolButton>
    )
  })

const ToolGroup = ({ items }) => (
  <>
    <Bar>
      <Grip />
      <Tools items={items} />
    </Bar>
    <Overflow aria-label="toolbar options">
      <OverflowGlyph />
    </Overflow>
  </>
)

const standard = [
  "newProject", "newFolder", "newBook", "newGraph", "newMatrix", "newFunction", "v", "newLayout", "newNotes", "newDigit", "|",
  "open", "openTemplate", "save", "saveTemplate", "|", "run", "|",
  <ComboBox w={88} label="zoom" value="100%" live />, "|",
  "-print", "slide", "record", "film", "|", "codeBuilder", "command", "cascade", "v", "|", "explorer", "|",
  "+findFolder", "+findGraph", "results", "script", "gear", "|", "-addColumn",
]
const columnTools = ["statColumn", "statRow", "-sort", "|", "-setValues", "|", "histogram", "histogram2", "histogram3", "|", "filter", "filterOff", "filterRun"]
const axisTools = ["colX", "colY", "colZ", "colErr", "colNone", "|", "toFirst", "toLeft", "toRight", "toLast"]
const databaseTools = ["-dbFind", "dbEdit", "dbOpen", "-dbPreview", "-dbImport", "-dbRemove"]

const importTools = ["wizard", "importOne", "importMany", "importExcel", "|", "-reimport", "-reimportOpts", "-reimportSheet", "|", "batch"]
const editTools = ["-cut", "-copy", "paste"]
const fontTools = [
  <ComboBox w={190} label="font" value="默认: 宋体" pad={30}>
    <Svg viewBox="0 0 16 16" $size={20}>
      <text x="0" y="10" fontSize="12" fill="#777" fontFamily="Liberation Serif">T</text>
      <text x="5" y="15" fontSize="15" fontWeight="700" fontFamily="Liberation Serif">T</text>
    </Svg>
  </ComboBox>,
  <ComboBox w={88} label="size" value="0" />,
  "bold", "italic", "underline", "sup", "sub", "supsub", "greek", "bigger", "smaller", "align", "v", "valign", "v", "fontColor", "V",
]
const styleTools = [
  "bucket", "V", "palette", "V", "pen", "V", "light",
  <ComboBox w={88} label="line style" value="实线" pad={36}>
    <svg width="30" height="20" viewBox="0 0 30 20"><path d="M0 10h28" stroke="#000" strokeWidth="4" /></svg>
  </ComboBox>,
  <ComboBox w={89} label="line width" value="0" />,
  <ColorWell aria-label="colour" />, "V",
  <ComboBox w={88} label="pattern" value="0" />,
  "hatch", "V", "-borders", "v", "merge",
]
const maskTools = ["maskM", "maskX", "|", "moveV", "moveH", "|", "lockScale"]

const plotTools = ["line", "v", "scatter", "v", "lineSymbol", "v", "column", "v", "multiPanel", "v", "box", "v", "area", "v", "polar", "v", "stock", "v", "template"]
const plot3d = ["bars3d", "v", "|", "surface3d", "v", "scatter3d", "v", "contour", "v", "profile", "v", "image"]
const maskData = ["maskDog", "maskDogX", "|", "maskShow", "-swap1", "swap2", "|", "swap3"]
const rotate3d = ["rotL", "rotR", "tiltL", "tiltR", "tiltDown", "tiltUp", "perspUp", "perspDown", "fit", "resetRot", "resetAll", <ComboBox w={88} label="angle" value="10" />]

/* ---------- side bars ---------- */

const Main = styled.div`
  display: flex;
  flex: 1;
  min-height: 0;
`

const HiddenTabs = styled.div`
  display: flex;
  flex-direction: column;
  gap: 14px;
  width: 29px;
  flex: none;
  padding-top: 4px;
`

const HiddenTab = styled.button`
  width: 26px;
  padding: 6px 0 24px;
  border-bottom: 1px solid #ccc;
  background: #f1f1f3;
  color: #777;
  font-size: 18px;
  writing-mode: vertical-rl;
  text-orientation: sideways;
  text-align: left;
`

const SideBars = styled.div`
  display: flex;
  flex-direction: column;
  flex: none;
  width: 51px;
`

const SideBar = styled.div`
  width: ${(p) => p.$w}px;
  border-left: 1px solid #a6a6c0;
  border-right: 1px solid #a6a6c0;
  background: linear-gradient(90deg, #f7f9ff, #e2e3f0 50%, #b4b4cc);
  display: flex;
  flex-direction: column;
`

const SideRow = styled.div`
  display: flex;
  align-items: center;
`

const SideEnd = styled.button`
  height: 17px;
  width: ${(p) => p.$w}px;
  padding-right: 4px;
  text-align: right;
  border-radius: 0 0 6px 6px;
  background: linear-gradient(90deg, #e4e5f4, #b4b4cc);
  svg {
    display: block;
    margin-left: auto;
  }
`

const SideTools = ({ items, w }) => (
  <>
    <SideBar $w={w}>
      <Grip $across />
      {items.map((item, i) => {
        if (item === "|") return <Divider key={i} $across />
        const parts = item.split(" ")
        return (
          <SideRow key={i}>
            <Tools items={parts} />
          </SideRow>
        )
      })}
    </SideBar>
    <SideEnd $w={w} aria-label="toolbar options">
      <svg width="11" height="10" viewBox="0 0 11 10" aria-hidden="true">
        <path d="M1 1v8M3.500 1v8" stroke="#000" />
        <path d="M6 0v10l4-5z" />
      </svg>
    </SideEnd>
  </>
)

const toolsLeft = [
  "+pointer", "zoomIn", "-zoomOut", "reader", "selector v", "dataSelect", "maskOval v", "maskDots v", "drawDots", "textTool", "region",
  "arrow v", "line v", "rect v", "hand", "formula v", "graphObj v", "handAxes", "cube",
]
const addLeft = ["colorBands", "swirl", "legend", "bracket", "ruler", "stampClock", "stampFolder", "table"]
const toolsRight = [
  "checker", "axisXYZ", "axisX", "axisY", "swapXY", "+runGraph", "|", "layer1", "layer4", "layer4b", "cascade v", "|",
  "frameBL", "frameT", "frameR", "frameAll", "inset", "insetData",
]
const arrangeRight = [
  "alignL", "alignR", "|", "alignT", "alignB", "|", "centerV", "centerH", "|", "sameW", "sameH", "|", "distH", "distV", "front", "back", "|",
  "selOne", "selNum", "|", "group", "ungroup",
]

/* ---------- docked panels ---------- */

const PanelHead = styled.div`
  display: flex;
  align-items: center;
  flex: none;
  height: 33px;
  padding: 0 2px 0 4px;
  background: linear-gradient(#bfcddb, #d8e5f2);
  h2 {
    flex: 1;
    margin: 0;
    font-size: 17px;
    font-weight: 400;
  }
`

const PanelButton = styled.button`
  width: 22px;
  height: 24px;
  display: flex;
  align-items: center;
  justify-content: center;
`

const PanelTitle = ({ children }) => (
  <PanelHead>
    <h2>{children}</h2>
    <PanelButton aria-label="menu">
      <svg width="14" height="8" viewBox="0 0 14 8"><path d="M0 0h14L7 8z" /></svg>
    </PanelButton>
    <PanelButton aria-label="pin">
      <svg width="12" height="14" viewBox="0 0 12 14"><path d="M3 1h6v7H3zM8 1v7M0 8.500h12M6 9v5" stroke="#000" strokeWidth="1.500" fill="none" /></svg>
    </PanelButton>
    <PanelButton aria-label="close">
      <svg width="13" height="13" viewBox="0 0 13 13"><path d="M1 1l11 11M12 1L1 12" stroke="#000" strokeWidth="2" /></svg>
    </PanelButton>
  </PanelHead>
)

const Center = styled.div`
  display: flex;
  flex-direction: column;
  flex: 1;
  min-width: 0;
  padding-bottom: 3px;
`

const Work = styled.div`
  display: flex;
  flex: 1;
  min-height: 0;
  gap: 4px;
`

const ProjectPanel = styled.section`
  display: flex;
  flex-direction: column;
  flex: none;
  width: 420px;
`

const FolderTree = styled.ul`
  flex: none;
  height: 221px;
  margin: 0 0 4px;
  padding: 1px 0 0 4px;
  list-style: none;
  border: 1px solid #9ba0aa;
  background: #fff;
`

const FolderItem = styled.li`
  display: flex;
  align-items: center;
  gap: 5px;
  height: 26px;
  width: max-content;
  margin-left: ${(p) => p.$level * 25}px;
  padding: 0 6px 0 1px;
  border-radius: 2px;
  background: ${(p) => (p.$on ? "#d9d9d9" : "none")};
`

const FolderIcon = () => (
  <svg width="24" height="22" viewBox="0 0 24 22" aria-hidden="true">
    <path d="M1 21V3l3-2h6l2 3h11v17z" fill="#e6e24a" stroke="#7d7a1a" />
    <path d="M1.500 7h21" stroke="#fbf9b0" strokeWidth="2" />
    <path d="M2 21.500h22V5" fill="none" stroke="#333" />
  </svg>
)

const ListBox = styled.div`
  display: flex;
  flex-direction: column;
  flex: 1;
  min-height: 0;
  border: 1px solid #9ba0aa;
  background: #fff;
  overflow: hidden;
`

const FileTable = styled.table`
  flex: 1;
  table-layout: fixed;
  width: 420px;
  height: 1000px;
  th {
    height: 30px;
    padding: 0 4px 0 5px;
    text-align: left;
    font-size: 17px;
    font-weight: 400;
    white-space: nowrap;
  }
  td {
    height: 28px;
    padding: 0 0 0 5px;
    white-space: nowrap;
    overflow: hidden;
  }
  th + th, td + td {
    border-left: 1px solid #e3edf8;
  }
  th > span {
    float: right;
    margin: 9px 9px 0 0;
    border: 4px solid transparent;
    border-top: 0;
    border-bottom: 6px solid #888;
  }
`

const FileRow = styled.tr`
  font-weight: ${(p) => (p.$bold ? 700 : 400)};
`

const FileName = styled.div`
  display: flex;
  align-items: center;
  gap: 2px;
`

const Filler = styled.tr`
  td {
    height: auto;
  }
`

const BookIcon = () => (
  <svg width="24" height="24" viewBox="0 0 24 24" aria-hidden="true">
    <path d="M1 1h21v21H1z" fill="#fff" stroke="#000" strokeWidth="2" />
    <path d="M2 7h19M2 14h19M8 7v15M15 2v20" stroke="#22a" />
    <path d="M3 10.500h4M9.500 10.500h4M16.500 10.500h4M3 17.500h4M9.500 17.500h4M16.500 17.500h4" stroke="#1e3" strokeWidth="4" />
    <path d="M4 3v3M10 3v3M17 3v3" stroke="#f22" strokeWidth="3" />
  </svg>
)

const GraphIcon = ({ hot }) => (
  <svg width="24" height="24" viewBox="0 0 24 24" aria-hidden="true">
    <path d="M1 1h21v21H1z" fill="#fff" stroke={hot ? "#e0e" : "#000"} strokeWidth="2" />
    <path d="M4 3h15v15H4z" fill="#2ee" stroke="#f22" />
    <path d="M6 8l3-2 2 1 3-2 3 1M6 15l4-2 7-1" stroke="#000" fill="none" strokeWidth="1.500" />
    <path d="M4 10h15M4 20h16" stroke="#f22" strokeDasharray="3 2" />
  </svg>
)

const files = [
  ["Book1", "工作簿", "常规", "106K"],
  ["Book2", "工作簿", "常规", "28K"],
  ["Graph1", "图形", "最...", "19K"],
  ["Graph2", "图形", "最...", "19K"],
  ["Graph3", "图形", "最...", "19K"],
  ["Graph4", "图形", "最...", "19K"],
  ["Graph5", "图形", "常规", "32K"],
]

const Track = styled.div`
  position: relative;
  flex: none;
  background: #f0f0f0;
  ${(p) => (p.$v ? "width" : "height")}: ${(p) => p.$size || 26}px;
  display: flex;
  flex-direction: ${(p) => (p.$v ? "column" : "row")};
  align-items: center;
  ${(p) => p.$grow && "flex: 1;"}
  padding: ${(p) => p.$pad || 0};
`

const Thumb = styled.div`
  flex: 0 0 ${(p) => p.$len};
  ${(p) => (p.$v ? "width: 11px;" : "height: 11px;")}
  background: #868686;
`

const ProjectManager = () => (
  <ProjectPanel>
    <PanelTitle>项目管理器 (1)</PanelTitle>
    <FolderTree>
      <FolderItem $level={0}>
        <FolderIcon />
        UNTITLED
      </FolderItem>
      <FolderItem $level={1} $on>
        <FolderIcon />
        Folder1
      </FolderItem>
    </FolderTree>
    <ListBox>
      <FileTable>
        <colgroup>
          <col width="114" />
          <col width="68" />
          <col width="78" />
          <col width="68" />
          <col width="50" />
          <col />
        </colgroup>
        <thead>
          <tr>
            <th>名称<span /></th>
            <th>长名称</th>
            <th>短名称</th>
            <th>类型</th>
            <th>视图</th>
            <th>大小</th>
          </tr>
        </thead>
        <tbody>
          {files.map(([name, type, view, size]) => {
            const active = name === "Graph5"
            return (
              <FileRow key={name} $bold={active}>
                <td>
                  <FileName>
                    {name.startsWith("Book") ? <BookIcon /> : <GraphIcon hot={active} />}
                    {name}
                  </FileName>
                </td>
                <td />
                <td>{active ? "Grap..." : name}</td>
                <td>{type}</td>
                <td>{view}</td>
                <td>{size}</td>
              </FileRow>
            )
          })}
          <Filler>
            <td /><td /><td /><td /><td /><td />
          </Filler>
        </tbody>
      </FileTable>
      <Track $pad="0 0 0 27px">
        <Thumb $len="164px" />
      </Track>
    </ListBox>
  </ProjectPanel>
)

/* ---------- child windows ---------- */

const Mdi = styled.main`
  display: flex;
  flex-direction: column;
  flex: 1;
  min-width: 0;
  margin-right: 3px;
  border: 2px solid #6f6f76;
  border-right: 0;
  border-bottom: 2px solid #fff;
`

const MdiBody = styled.div`
  display: flex;
  flex: 1;
  min-height: 0;
`

const Desk = styled.div`
  position: relative;
  flex: 1;
  overflow: hidden;
  background: #ababab;
`

const Frame = styled.section`
  position: absolute;
  left: ${(p) => p.$x}px;
  top: ${(p) => p.$y}px;
  width: ${(p) => p.$w}px;
  height: ${(p) => p.$h}px;
  display: flex;
  flex-direction: column;
  border: 1px solid #4a4e58;
  border-radius: 7px 7px 0 0;
  box-shadow: inset 1px 1px 0 #eef4fa;
  padding: 0 10px 10px;
  background: ${(p) =>
    p.$active
      ? "linear-gradient(#98b4d2, #a6bfdb 24px, #bad1ea 44px)"
      : "linear-gradient(#bccadb, #c8d5e2 24px, #d7e4f2 44px)"};
`

const FrameTitle = styled.div`
  display: flex;
  align-items: center;
  gap: 3px;
  flex: none;
  height: 44px;
  padding: 7px 1px 0 0;
  color: ${(p) => (p.$active ? "#111" : "#9a9ea4")};
  h3 {
    flex: 1;
    margin: 0 0 0 2px;
    font-size: 18px;
    font-weight: 400;
  }
`

const FrameButton = styled.button`
  display: flex;
  align-items: center;
  justify-content: center;
  width: 49px;
  height: 29px;
  border: 1px solid ${(p) => (p.$red ? "#4a1020" : "#7c93b4")};
  border-radius: 2px;
  box-shadow: inset 0 0 0 1px ${(p) => (p.$red ? "#e5a79f" : "#dbe6f1")};
  background: ${(p) =>
    p.$red
      ? "linear-gradient(#e59d92 48%, #b93c25 50%, #c9543b)"
      : p.$active
      ? "linear-gradient(#bfd2e8 48%, #98b4d3 50%, #abc5e0)"
      : "linear-gradient(#ccd9e6, #d3dfeb)"};
`

const Client = styled.div`
  display: flex;
  flex-direction: column;
  flex: 1;
  min-height: 0;
  overflow: hidden;
  border: 2px solid #777;
  border-color: #777 #eee #eee #777;
  border-top-width: 1px;
  border-left-width: 1px;
  background: #fff;
`

const ChildWindow = ({ x, y, w, h, title, icon, active, children }) => (
  <Frame $x={x} $y={y} $w={w} $h={h} $active={active}>
    <FrameTitle $active={active}>
      {icon}
      <h3>{title}</h3>
      <FrameButton $active={active} aria-label="minimize">
        <svg width="18" height="7" viewBox="0 0 18 7"><path d="M1 1h16v5H1z" fill="#fff" stroke="#4d5566" /></svg>
      </FrameButton>
      <FrameButton $active={active} aria-label="maximize">
        <svg width="18" height="16" viewBox="0 0 18 16"><path fillRule="evenodd" d="M1 1h16v14H1zM6 5v6h6V5z" fill="#fff" stroke="#4d5566" /></svg>
      </FrameButton>
      <FrameButton $red={active} aria-label="close">
        <svg width="18" height="16" viewBox="0 0 18 16">
          <path d="M3 2l12 12M15 2L3 14" stroke="#4d5566" strokeWidth="5.500" />
          <path d="M3.500 2.500l11 11M14.500 2.500l-11 11" stroke="#fff" strokeWidth="3.500" />
        </svg>
      </FrameButton>
    </FrameTitle>
    <Client>{children}</Client>
  </Frame>
)

/* ---------- worksheets ---------- */

const SheetArea = styled.div`
  position: relative;
  display: flex;
  flex: 1;
  min-height: 0;
  overflow: hidden;
`

const Sheet = styled.table`
  table-layout: fixed;
  flex: none;
  width: ${(p) => p.$w}px;
  height: max-content;
  align-self: flex-start;
  font-family: ${song};
  font-size: ${(p) => p.$font}px;
  line-height: ${(p) => p.$row - 3}px;
`

const ColHead = styled.th`
  position: relative;
  height: ${(p) => p.$h}px;
  border-right: 1px solid ${(p) => (p.$dark ? "#fff" : "#000")};
  border-bottom: 2px solid ${(p) => (p.$dark ? "#ddd" : "#000")};
  background: ${(p) => (p.$dark ? "#20201c" : p.$on ? "#b4bad2" : "#e0dfe4")};
  color: ${(p) => (p.$dark ? "#fff" : "#000")};
  font-weight: ${(p) => (p.$bold ? 700 : 400)};
  white-space: nowrap;
  svg {
    position: absolute;
    right: 5px;
    bottom: 1px;
  }
`

const RowHead = styled.th`
  height: ${(p) => p.$h}px;
  padding-right: 4px;
  border-right: 1px solid #000;
  border-bottom: 1px solid #000;
  background: ${(p) => (p.$on ? "#b4bad2" : "#e0dfe4")};
  font-weight: ${(p) => (p.$bold ? 700 : 400)};
  text-align: right;
  vertical-align: top;
  overflow: hidden;
`

const Cell = styled.td`
  height: ${(p) => p.$h}px;
  padding: 0 4px;
  border-right: 1px solid ${(p) => (p.$dark ? "#484848" : "#bfbfbf")};
  border-bottom: 1px solid ${(p) => (p.$dark ? "#484848" : "#bfbfbf")};
  background: ${(p) => p.$bg || "#fff"};
  color: ${(p) => (p.$dark ? "#fff" : "#000")};
  text-align: ${(p) => p.$align || "right"};
  vertical-align: ${(p) => (p.$align === "center" ? "middle" : "top")};
  white-space: nowrap;
  overflow: hidden;
  outline: ${(p) => (p.$cursor ? "3px solid #111" : "none")};
  outline-offset: -2px;
`

const SheetCorner = () => (
  <svg width="22" height="21" viewBox="0 0 24 23" aria-hidden="true">
    <text x="1" y="9" fontSize="11" fontWeight="700" fontFamily="Liberation Sans">A-Z</text>
    <path d="M1.500 11.500h20v10h-20zM1.500 15.500h20M8 11.500v10M15 11.500v10" fill="#fff" stroke="#000" strokeWidth="1.500" />
  </svg>
)

const CornerHead = styled.th`
  height: ${(p) => p.$h}px;
  border-right: 1px solid #000;
  border-bottom: 2px solid #000;
  background: #e0dfe4;
  line-height: 0;
  text-align: left;
  svg {
    display: block;
  }
`

const Lock = ({ play }) => (
  <svg width="16" height="19" viewBox="0 0 16 19" aria-hidden="true">
    <path d="M4 8V2h8v6" fill="none" stroke="#000" strokeWidth="2.500" />
    <path d="M1 7h14v11H1z" fill="#0f0" stroke="#000" />
    <path d={play ? "M4 9l8 3.500L4 16z" : "M7 9h2v3h3v2H9v3H7v-3H4v-2h3z"} />
  </svg>
)

const SheetTabs = styled.div`
  display: flex;
  align-items: stretch;
  flex: none;
  height: 27px;
  border-top: ${(p) => (p.$line ? "2px solid #000" : "0")};
  background: #c8c8c8;
`

const TabArrow = styled.button`
  flex: none;
  width: 26px;
  border: 1px solid #999;
  background: #f2f2f2;
  font-size: 8px;
  line-height: 20px;
  color: #333;
`

const TabStrip = styled.div`
  display: flex;
  flex: none;
  width: ${(p) => p.$w || "auto"};
  padding-left: 3px;
`

const SheetTab = styled.button`
  position: relative;
  padding: 0 10px;
  height: 25px;
  font: ${(p) => (p.$bold ? "700 21px" : "400 20px")} / 24px "Liberation Mono", monospace;
  z-index: 0;
  &::before {
    content: "";
    position: absolute;
    z-index: -1;
    inset: 0 1px;
    border: 1px solid #000;
    border-width: 1px 2px 0;
    background: ${(p) => (p.$on ? "#fff" : "#f0f0f0")};
    transform: perspective(40px) rotateX(-10deg);
    transform-origin: top;
  }
`

const SheetScroll = styled.div`
  display: flex;
  align-items: center;
  flex: 1;
  min-width: 0;
  margin-left: 4px;
  padding: 0 48px 0 26px;
  border-left: 2px solid #555;
  border-right: 2px solid #000;
  background: #f0f0f0;
`

const SizeGrip = styled.div`
  flex: none;
  width: 27px;
  margin-left: 3px;
  border-left: 2px solid #333;
  background: #f0f0f0;
`

const meta = ["长名称", "单位", "注释", "F(x)="]
const rowsUpTo = (n) => Array.from({ length: n }, (_, i) => i + 1)

const book1Cols = [
  ["A(X1)", 83], ["B(Y1)", 83], ["C(X2)", 73], ["D(Y2)", 84], ["E(X3)", 83], ["F", 191], ["G", 73], ["H", 120], ["I", 95],
]
const book1Meta = [
  ["A", "百分比", "X", "Y", "附加信息"],
  [],
  ["百分位数", "", "参照线", "参照线", "附加表"],
  [],
]
const book1Data = [
  ["0.11839", "11.90476", "0.11215", "5.95238", "输入数据"],
  ["0.19736", "30.95238", "0.4878", "94.04762", "分布"],
  ["0.28736", "50", "", "", "形状"],
  ["0.38685", "69.04762", "", "", "刻度"],
  ["0.45902", "88.09524"],
]

const Book1 = () => (
  <ChildWindow x={0} y={0} w={1000} h={1282} title="Book1 *" icon={<BookIcon />}>
    <SheetArea>
      <Sheet $w={950} $font={18} $row={24}>
        <colgroup>
          <col width="65" />
          {book1Cols.map(([name, w]) => <col key={name} width={w} />)}
        </colgroup>
        <thead>
          <tr>
            <CornerHead $h={24}><SheetCorner /></CornerHead>
            {book1Cols.map(([name], i) => (
              <ColHead key={name} $h={24} $on={i === 0} $bold={i === 0}>
                {name}
                {i < 5 && <Lock play={i === 0} />}
              </ColHead>
            ))}
          </tr>
        </thead>
        <tbody>
          {meta.map((label, r) => (
            <tr key={label}>
              <RowHead $h={24}>{label}</RowHead>
              {book1Cols.map(([name], c) => (
                <Cell key={name} $h={24} $bg={r === 3 ? "#f6f5b0" : "#faf9c8"} $align="center">
                  {book1Meta[r][c]}
                </Cell>
              ))}
            </tr>
          ))}
          {rowsUpTo(45).map((n) => (
            <tr key={n}>
              <RowHead $h={24} $on={n === 12} $bold={n === 12}>{n}</RowHead>
              {book1Cols.map(([name], c) => (
                <Cell key={name} $h={24} $align={c === 4 ? "left" : "right"} $cursor={n === 12 && c === 0}>
                  {book1Data[n - 1] && book1Data[n - 1][c]}
                </Cell>
              ))}
            </tr>
          ))}
        </tbody>
      </Sheet>
      <Track $v $grow />
    </SheetArea>
    <SheetTabs>
      <TabArrow aria-label="previous sheet">◀</TabArrow>
      <TabArrow aria-label="next sheet">▶</TabArrow>
      <TabStrip $w="632px">
        <SheetTab>Sheet1</SheetTab>
        <SheetTab $on $bold>PlotData1</SheetTab>
        <SheetTab>PlotData2</SheetTab>
        <SheetTab>PlotData3</SheetTab>
        <SheetTab>PlotData4</SheetTab>
      </TabStrip>
      <SheetScroll>
        <Thumb $len="180px" />
      </SheetScroll>
      <SizeGrip />
    </SheetTabs>
  </ChildWindow>
)

const book2Cols = [
  "C(X2)", "D(Y2)", "E(X3)", "F(Y3)", "G(X4)", "H(Y4)", "I(Y4)",
  "J(X5)", "K(Y5)", "L(X6)", "M(Y6)", "N(X7)", "O(Y7)", "P(X8)", "Q(Y8)",
]
const book2Data = [
  ["0.0812", "11.90476", "0.06737", "11.90476", "0.04839", "11.90476", "", "0.11215", "5.95238", "0.07306", "5.95238", "0.06013", "5.95238", "0.04441", "5.95238"],
  ["0.1452", "30.95238", "0.12556", "30.95238", "0.09681", "30.95238", "", "0.4878", "94.04762", "0.41378", "94.04762", "0.3873", "94.04762", "0.30552", "94.04762"],
  ["0.21556", "50", "0.1939", "50", "0.15471", "50"],
  ["0.3049", "69.04762", "0.2764", "69.04762", "0.2083", "69.04762"],
  ["0.39429", "88.09524", "0.3689", "88.09524", "0.29258", "88.09524"],
]

const Selection = styled.div`
  position: absolute;
  left: 605px;
  top: 27px;
  width: 583px;
  bottom: 2px;
  border: 1px solid #fff;
  outline: 2px solid #111;
`

const Book2 = () => (
  <ChildWindow x={473} y={40} w={1242} h={1190} title="Book2 *" icon={<BookIcon />}>
    <SheetArea>
      <Sheet $w={1188} $font={14} $row={18}>
        <colgroup>
          <col width="93" />
          {book2Cols.map((name) => <col key={name} width="73" />)}
        </colgroup>
        <thead>
          <tr>
            <CornerHead $h={26}><SheetCorner /></CornerHead>
            {book2Cols.map((name, i) => (
              <ColHead key={name} $h={26} $dark={i > 7} $bold={i === 7}>{name}</ColHead>
            ))}
          </tr>
        </thead>
        <tbody>
          {meta.map((label, r) => (
            <tr key={label}>
              <RowHead $h={18} $on>{label}</RowHead>
              {book2Cols.map((name, c) => {
                const dark = c > 6
                const bg = dark ? (r === 3 ? "#07074a" : "#030335") : r === 3 ? "#f6f5b0" : "#faf9c8"
                return <Cell key={name} $h={18} $dark={dark} $bg={bg} />
              })}
            </tr>
          ))}
          {rowsUpTo(56).map((n) => (
            <tr key={n}>
              <RowHead $h={n === 2 ? 16 : 18} $on>{n}</RowHead>
              {book2Cols.map((name, c) => (
                <Cell key={name} $h={n === 2 ? 16 : 18} $dark={c > 6} $bg={c > 6 ? "#000" : "#fff"}>
                  {book2Data[n - 1] && book2Data[n - 1][c]}
                </Cell>
              ))}
            </tr>
          ))}
        </tbody>
      </Sheet>
      <Selection />
      <Track $v $size={26} $pad="25px 0 0 4px">
        <Thumb $v $len="1046px" />
      </Track>
    </SheetArea>
    <SheetTabs $line>
      <TabArrow aria-label="previous sheet">◀</TabArrow>
      <TabArrow aria-label="next sheet">▶</TabArrow>
      <TabStrip $w="750px">
        <SheetTab $on>Sheet1</SheetTab>
      </TabStrip>
      <SheetScroll>
        <Track $grow $pad="0 0 0 38px">
          <Thumb $len="287px" />
        </Track>
      </SheetScroll>
      <SizeGrip />
    </SheetTabs>
  </ChildWindow>
)

/* ---------- graph ---------- */

const series = [
  ["#4d4d4d", [0.0812, 0.1452, 0.21556, 0.3049, 0.39429]],
  ["#f23c3c", [0.06737, 0.12556, 0.1939, 0.2764, 0.3689]],
  ["#1a6fdf", [0.04839, 0.09681, 0.15471, 0.2083, 0.29258]],
]
const levels = [11.90476, 30.95238, 50, 69.04762, 88.09524]
const fits = [
  ["#4d4d4d", 0.11215, 0.4878],
  ["#f23c3c", 0.07306, 0.41378],
  ["#1a6fdf", 0.06013, 0.3873],
  ["#37ad6b", 0.04441, 0.30552],
]
const px = (v) => 124 + v * 903
const py = (v) => 411 - v * 3.185

const Marker = ({ kind, x, y, color }) => {
  if (kind === 0) return <rect x={x - 4} y={y - 4} width="9" height="9" fill={color} />
  if (kind === 1) return <circle cx={x} cy={y} r="5" fill={color} />
  return <path d={`M${x} ${y - 6}l6 10h-12z`} fill={color} />
}

const Plot = styled.svg`
  display: block;
  font: 16px ${song};
`

const LayerTabs = styled.div`
  position: absolute;
  left: 1px;
  top: 0;
  display: flex;
  gap: 2px;
`

const LayerTab = styled.button`
  width: 29px;
  height: 29px;
  border: 1px solid #c6c6c6;
  border-color: ${(p) => (p.$on ? "#c0c0c0" : "#e4e4e4 #7a7a7a #7a7a7a #e4e4e4")};
  border-right-width: ${(p) => (p.$on ? 1 : 2)}px;
  border-bottom-width: ${(p) => (p.$on ? 1 : 2)}px;
  background: #c0c0c0;
  color: ${(p) => (p.$on ? "#000" : "#fff")};
  font: 700 24px/26px "Liberation Sans", sans-serif;
`

const xTicks = Array.from({ length: 11 }, (_, i) => i * 0.05)
const yTicks = [0, 20, 40, 60, 80, 100]

const Graph5 = () => (
  <ChildWindow x={517} y={298} w={719} h={591} title="Graph5 *" icon={<GraphIcon />} active>
    <SheetArea>
      <Plot width="693" height="531" viewBox="0 0 693 531">
        <path d="M124.500 61V442.500H598" stroke="#000" fill="none" />
        {xTicks.map((v) => (
          <g key={v}>
            <path d={`M${px(v)} 442v8M${px(v + 0.025)} 442v4`} stroke="#000" shapeRendering="crispEdges" />
            <text x={px(v)} y="469" textAnchor="middle">{v.toFixed(2)}</text>
          </g>
        ))}
        {yTicks.map((v) => (
          <g key={v}>
            <path d={`M124 ${py(v)}h-7M124 ${py(v + 10)}h-4`} stroke="#000" shapeRendering="crispEdges" />
            <text x="110" y={py(v) + 6} textAnchor="end">{v}</text>
          </g>
        ))}
        <path d="M124 442.500h-4" stroke="#000" />
        <text x="360" y="495" fontSize="19" textAnchor="middle">C</text>
        <text transform="translate(79 252) rotate(-90)" fontSize="19" textAnchor="middle">D</text>
        {series.map(([color, xs], k) =>
          xs.map((v, i) => <Marker key={`${k}-${i}`} kind={k} x={px(v)} y={py(levels[i])} color={color} />)
        )}
        {fits.map(([color, a, b]) => (
          <path key={color} d={`M${px(a)} ${py(5.95238)}L${px(b)} ${py(94.04762)}`} stroke={color} shapeRendering="crispEdges" />
        ))}
        <rect x="509.500" y="19.500" width="59" height="62" fill="#fff" stroke="#000" />
        {["D", "F", "H"].map((name, k) => (
          <g key={name}>
            <Marker kind={k} x={529} y={31 + k * 20} color={series[k][0]} />
            <text x="554" y={37 + k * 20} fontSize="17">{name}</text>
          </g>
        ))}
      </Plot>
      <LayerTabs>
        <LayerTab>1</LayerTab>
        <LayerTab $on>2</LayerTab>
      </LayerTabs>
    </SheetArea>
  </ChildWindow>
)

const Minimised = styled.div`
  position: absolute;
  left: 0;
  bottom: 0;
  height: 5px;
  display: flex;
  overflow: hidden;
`

const MiniWindow = styled.div`
  display: flex;
  align-items: flex-start;
  width: 237px;
  padding-left: 5px;
  border-right: 3px double #555;
  border-top: 1px solid #555;
  background: #c6d4e2;
  > svg {
    margin-right: auto;
  }
`

const MiniButton = styled.button`
  width: 50px;
  height: 24px;
  border: 1px solid #7c93b4;
  svg {
    display: block;
    margin: 0 auto;
  }
`

/* ---------- right panels ---------- */

const RightDock = styled.aside`
  display: flex;
  flex-direction: column;
  gap: 4px;
  flex: none;
  width: 279px;
  margin-left: 3px;
`

const ObjectPanel = styled.section`
  position: relative;
  flex: none;
  height: 439px;
  display: flex;
  flex-direction: column;
`

const ObjectTree = styled.ul`
  flex: 1;
  margin: 0;
  padding: 2px 1px;
  list-style: none;
  border: 2px solid #666;
  border-right: 1px solid #ddd;
  background: #fff;
  font: 17px/30px "Liberation Sans", "Noto Sans CJK SC", sans-serif;
`

const Node = styled.li`
  display: flex;
  align-items: center;
  gap: 3px;
  height: 30px;
  padding-left: ${(p) => 2 + p.$level * 22}px;
  background: ${(p) => (p.$on ? "#0078d7" : "none")};
  color: ${(p) => (p.$on ? "#fff" : "#000")};
  font-weight: ${(p) => (p.$bold ? 700 : 400)};
  label {
    display: flex;
    align-items: center;
    gap: 3px;
  }
`

const Expander = styled.button`
  display: flex;
  align-items: center;
  justify-content: center;
  width: 18px;
  height: 18px;
  border: 1px solid #888;
  background: linear-gradient(#fff, #ddd);
  &::after {
    content: "";
    width: 12px;
    height: 2px;
    background: #3a5a9a;
  }
`

const Check = styled.input.attrs({ type: "checkbox" })`
  appearance: none;
  display: flex;
  align-items: center;
  justify-content: center;
  width: 23px;
  height: 23px;
  border-radius: 4px;
  background: #005fb8;
  &:checked::after {
    content: "";
    width: 10px;
    height: 6px;
    margin-bottom: 3px;
    border: solid #fff;
    border-width: 0 0 1px 1px;
    transform: rotate(-45deg);
  }
`

const Swatch = ({ kind, color }) => (
  <svg width="56" height="22" viewBox="0 0 56 22" aria-hidden="true">
    {kind === "line" && <path d="M0 11.500h56" stroke={color} />}
    {kind === "square" && <path d="M20 4h14v14H20z" fill={color} />}
    {kind === "circle" && <circle cx="27" cy="11" r="7" fill={color} />}
    {kind === "triangle" && <path d="M27 1l11 17H16z" fill={color} />}
  </svg>
)

const objects = [
  { level: 1, name: "Layer1", open: true },
  { level: 2, name: "g1", open: true },
  { level: 4, name: "D", kind: "square", color: "#4d4d4d", bold: true },
  { level: 4, name: "F", kind: "circle", color: "#f23c3c" },
  { level: 4, name: "H", kind: "triangle", color: "#1a6fdf" },
  { level: 1, name: "NoAxes", open: true },
  { level: 2, name: "g1", open: true },
  { level: 4, name: "K", kind: "line", color: "#4d4d4d", bold: true },
  { level: 4, name: "M", kind: "line", color: "#f23c3c" },
  { level: 4, name: "O", kind: "line", color: "#1a6fdf" },
  { level: 4, name: "Q", kind: "line", color: "#37ad6b" },
]

const TreeLines = styled.svg`
  position: absolute;
  left: 0;
  top: 33px;
  pointer-events: none;
`

const ObjectNode = ({ level, name, open, kind, color, bold }) => {
  const [on, setOn] = useState(true)
  return (
    <Node $level={level} $bold={bold}>
      {open && <Expander aria-label="collapse" />}
      <label>
        <Check checked={on} onChange={() => setOn(!on)} />
        {kind && <Swatch kind={kind} color={color} />}
        {name}
      </label>
    </Node>
  )
}

const Bubble = styled.div`
  position: absolute;
  left: 115px;
  top: 90px;
  display: flex;
  align-items: center;
  justify-content: center;
  width: 74px;
  height: 74px;
  border: 3px solid #e8f2fb;
  border-radius: 50%;
  background: linear-gradient(30deg, #6fd0ff, #4d9eff 55%, #2f7ff8);
  box-shadow: 0 1px 5px #9ab;
  color: #fff;
  font-size: 28px;
  font-weight: 300;
`

const AppsPanel = styled.section`
  flex: 1;
  min-height: 0;
  display: flex;
  flex-direction: column;
  padding-bottom: 3px;
`

const AppsBody = styled.div`
  display: flex;
  flex: 1;
  min-height: 0;
`

const AppTabs = styled.div`
  display: flex;
  flex-direction: column;
  align-items: center;
  width: 34px;
  flex: none;
  background: #f0f0f0;
  border-right: 1px solid #888;
`

const AppScroll = styled.button`
  display: flex;
  align-items: center;
  justify-content: center;
  width: 30px;
  height: 22px;
`

const AppTab = styled.button`
  position: relative;
  width: 34px;
  height: ${(p) => p.$h}px;
  padding-left: 5px;
  font: ${(p) => (p.$on ? "700 18px" : "400 20px")} / 26px ${ui};
  writing-mode: vertical-rl;
  text-orientation: sideways;
  text-align: center;
  svg {
    position: absolute;
    left: 3px;
    top: 0;
    z-index: 0;
    overflow: visible;
  }
  span {
    position: relative;
  }
`

const AppGrid = styled.div`
  display: grid;
  grid-template-columns: repeat(2, 113px);
  grid-auto-rows: 113px;
  flex: 1;
  padding: 4px 0 0 2px;
  background: #fff;
`

const AppItem = styled.button`
  display: flex;
  flex-direction: column;
  align-items: center;
  gap: 3px;
  line-height: 24px;
`

const apps = [
  {
    name: ["添加App"],
    art: (
      <>
        <path d="M1 1h42v40H1z" fill="#eef8fc" stroke="#4ab" />
        <path d="M1 1h42v5H1z" fill="#1b9bd7" />
        <path d="M4 8h14v18H4z" fill="#ccc" />
        <path d="M22 10h18M22 15h18M22 20h12M4 31h14M4 36h14" stroke="#bbb" strokeWidth="2" />
        <circle cx="34" cy="33" r="14" fill="#e52c2c" />
        <path d="M34 25v16M26 33h16" stroke="#fff" strokeWidth="5" />
      </>
    ),
  },
  {
    name: ["Send Graphs", "to PowerP..."],
    art: (
      <>
        <path d="M17 4l18-3v38l-18-4z" fill="#fff" stroke="#d9623c" />
        <path d="M36 6h12v27H36" fill="#fff" stroke="#d9623c" />
        <path d="M38 20h8M38 25h8M38 29h8" stroke="#d9401c" strokeWidth="2" />
        <circle cx="41" cy="14" r="4" fill="#d9401c" />
        <text x="21" y="26" fontSize="18" fontWeight="700" fill="#d9623c">P</text>
        <path d="M0 36h12v-4l7 7-7 7v-4H0z" fill="#d9401c" />
      </>
    ),
  },
  {
    name: ["Send Graphs", "to Word"],
    art: (
      <>
        <path d="M12 8l18-3v32l-18-3z" fill="#fff" stroke="#2a2a9a" />
        <path d="M31 9h12v25H31" fill="#fff" stroke="#2a2a9a" />
        <path d="M32 15h9M32 20h9M32 25h9M32 30h9" stroke="#2a2a9a" />
        <text x="13" y="26" fontSize="15" fontWeight="700" fill="#2a2a9a">W</text>
        <path d="M2 33h8v-5l8 7-8 7v-4H2z" fill="#00f" />
      </>
    ),
  },
  {
    name: ["Simple Fit"],
    art: (
      <>
        <path d="M0 0h48v48H0z" fill="#0b62c4" />
        <path d="M4 4v40h40" stroke="#fff" fill="none" strokeWidth="2" />
        <path d="M6 42c20-1 32-5 37-36" stroke="#f0047f" fill="none" strokeWidth="4" />
        <path d="M1 8l3-6 3 6zM40 41l6 3-6 3z" fill="#fff" />
        <path d="M10 41h4M19 39h4M28 35h4M33 28h4M39 20h4M41 7h4" stroke="#fff" strokeWidth="4" />
      </>
    ),
  },
]

const scrollGlyphs = ["M0 1h12M1 8l5-5 5 5z", "M1 8l5-5 5 5z", "M1 3l5 5 5-5z", "M1 2l5 5 5-5zM0 10h12"]

/* ---------- status bar ---------- */

const StatusBar = styled.footer`
  position: relative;
  display: flex;
  align-items: center;
  justify-content: flex-end;
  gap: 14px;
  flex: none;
  height: 30px;
  padding: 0 114px 2px 0;
  border-top: 1px solid #d8d8dc;
  border-bottom: 2px solid #c9d8e6;
  background: #f0f0f0;
  font-size: 16px;
  p {
    margin: 0;
    white-space: pre;
  }
`

const InputBar = styled.div`
  position: absolute;
  right: 1px;
  bottom: 3px;
  display: flex;
  align-items: center;
  justify-content: space-around;
  width: 113px;
  height: 36px;
  background: linear-gradient(#cfe6f8, #b8dbf5);
  color: #3a6a8a;
`

const Watermark = styled.div`
  position: absolute;
  right: 14px;
  bottom: 2px;
  color: rgba(120, 125, 135, 0.75);
  font-size: 17px;
  white-space: nowrap;
`

const menus = ["文件(F)", "编辑(E)", "查看(V)", "图(G)", "数据(D)", "分析(A)", "快捷分析(S)", "工具(T)", "格式(O)", "窗口(W)", "帮助(H)"]

const App = () => (
  <>
    <GlobalStyle />
    <Shell>
      <TitleBar>
        <svg width="23" height="25" viewBox="0 0 23 25" aria-hidden="true">
          <path d="M5 1h17v20H5z" fill="#dbe8f2" stroke="#9bb" />
          <circle cx="10" cy="15" r="9.500" fill="#e2543f" />
          <circle cx="8" cy="12" r="5" fill="#f29a88" />
          <path d="M5 19l4-8 3 6 4-9" stroke="#7a1a10" fill="none" />
        </svg>
        <h1>OriginPro 2018C 64-bit - D:\origin\origin33\UNTITLED * - /Folder1/</h1>
        <CaptionButton aria-label="minimize">
          <svg width="16" height="16" viewBox="0 0 16 16"><path d="M1 8.500h14" stroke="#000" /></svg>
        </CaptionButton>
        <CaptionButton aria-label="restore">
          <svg width="16" height="16" viewBox="0 0 16 16" fill="none" stroke="#000" strokeWidth="1.500"><rect x="1" y="4" width="11" height="11" rx="2" /><path d="M4 1.500h8q2.500 0 2.500 2.500v8" /></svg>
        </CaptionButton>
        <CaptionButton aria-label="close">
          <svg width="16" height="16" viewBox="0 0 16 16"><path d="M1 1l14 14M15 1L1 15" stroke="#000" strokeWidth="1.300" /></svg>
        </CaptionButton>
      </TitleBar>
      <MenuBar>
        <Grip />
        {menus.map((m) => <MenuItem key={m}>{m}</MenuItem>)}
      </MenuBar>
      <BarRow>
        <ToolGroup items={standard} />
        <ToolGroup items={columnTools} />
        <ToolGroup items={axisTools} />
        <ToolGroup items={databaseTools} />
      </BarRow>
      <BarRow>
        <ToolGroup items={importTools} />
        <ToolGroup items={editTools} />
        <ToolGroup items={fontTools} />
        <ToolGroup items={styleTools} />
        <ToolGroup items={maskTools} />
      </BarRow>
      <Main>
        <HiddenTabs>
          <HiddenTab>快速帮助</HiddenTab>
          <HiddenTab>消息日志</HiddenTab>
          <HiddenTab>提示日志 (5)</HiddenTab>
        </HiddenTabs>
        <SideBars>
          <SideTools items={toolsLeft} w={50} />
          <SideTools items={addLeft} w={37} />
        </SideBars>
        <Center>
          <Work>
            <ProjectManager />
            <Mdi>
              <MdiBody>
                <Desk>
                  <Minimised>
                    {[1, 2, 3, 4].map((n) => (
                      <MiniWindow key={n}>
                        <GraphIcon />
                        <MiniButton aria-label="restore">
                          <svg width="16" height="14" viewBox="0 0 16 14"><path d="M1 1h14v12H1z" fill="#fff" stroke="#4d5566" /></svg>
                        </MiniButton>
                        <MiniButton aria-label="maximize">
                          <svg width="16" height="14" viewBox="0 0 16 14"><path d="M0 3h16v10H0z" fill="#4d5566" /></svg>
                        </MiniButton>
                        <MiniButton aria-label="close">
                          <svg width="16" height="14" viewBox="0 0 16 14"><path d="M2 2l12 12M14 2L2 14" stroke="#4d5566" strokeWidth="4" /></svg>
                        </MiniButton>
                      </MiniWindow>
                    ))}
                  </Minimised>
                  <Book1 />
                  <Book2 />
                  <Graph5 />
                </Desk>
                <Track $v $pad="26px 0 0">
                  <Thumb $v $len="1199px" />
                </Track>
              </MdiBody>
              <Track $pad="0 82px 0 25px">
                <Thumb $len="100%" />
              </Track>
            </Mdi>
          </Work>
          <BarRow>
            <ToolGroup items={plotTools} />
            <ToolGroup items={plot3d} />
            <ToolGroup items={maskData} />
            <ToolGroup items={rotate3d} />
          </BarRow>
        </Center>
        <SideBars>
          <SideTools items={toolsRight} w={50} />
          <SideTools items={arrangeRight} w={37} />
        </SideBars>
        <RightDock>
          <ObjectPanel>
            <PanelTitle>对象管理器</PanelTitle>
            <ObjectTree>
              <Node $level={0} $on>
                <Expander aria-label="collapse" />
                <svg width="25" height="20" viewBox="0 0 25 20" aria-hidden="true">
                  <path d="M1 18V2h8l2 3h10v4" fill="#f6d268" stroke="#a97b14" />
                  <path d="M1 18L6 8h18l-4 10z" fill="#fbe08a" stroke="#a97b14" />
                </svg>
                Graph5
              </Node>
              {objects.map((o, i) => <ObjectNode key={i} {...o} />)}
            </ObjectTree>
            <TreeLines width="80" height="380" viewBox="0 0 80 380" aria-hidden="true">
              <path
                d="M14.500 30V199M14.500 49.500H26M14.500 199.500H26M36.500 60V79.500H48M36.500 210V229.500H48M58.500 90V169.500H72M58.500 109.500H72M58.500 139.500H72M58.500 240V349.500H72M58.500 259.500H72M58.500 289.500H72M58.500 319.500H72"
                stroke="#999"
                strokeDasharray="1 1"
                fill="none"
              />
            </TreeLines>
            <Bubble>--:--</Bubble>
          </ObjectPanel>
          <AppsPanel>
            <PanelTitle>Apps</PanelTitle>
            <AppsBody>
              <AppTabs>
                {scrollGlyphs.map((d) => (
                  <AppScroll key={d} aria-label="scroll">
                    <svg width="12" height="11" viewBox="0 0 12 11"><path d={d} stroke="#000" /></svg>
                  </AppScroll>
                ))}
                <AppTab $on $h={62}>
                  <svg width="31" height="62" viewBox="0 0 31 62"><path d="M31 0L1 14v34l30 14" fill="#fff" stroke="#666" /></svg>
                  <span>所有</span>
                </AppTab>
                <AppTab $h={66}>
                  <svg width="31" height="72" viewBox="0 0 31 72"><path d="M16-6L1 0v58l30 13" fill="none" stroke="#666" /></svg>
                  <span>Fitting</span>
                </AppTab>
              </AppTabs>
              <AppGrid>
                {apps.map((app, i) => (
                  <AppItem key={i}>
                    <svg width="48" height="48" viewBox="0 0 48 48" aria-hidden="true">{app.art}</svg>
                    <span>
                      {app.name[0]}
                      {app.name[1] && <br />}
                      {app.name[1]}
                    </span>
                  </AppItem>
                ))}
              </AppGrid>
            </AppsBody>
          </AppsPanel>
        </RightDock>
      </Main>
      <StatusBar>
        <p>--</p>
        <p>AU : 开  Light Grids  1:[Book2]Sheet1!Col(K)[1:2]  2:[Graph5]1</p>
        <InputBar>
          <span>中</span>
          <svg width="22" height="18" viewBox="0 0 22 18"><path d="M6 1L0 5l3 4 2-1v9h12V8l2 1 3-4-6-4c-2 3-8 3-10 0z" fill="#3d6f94" /></svg>
          <svg width="22" height="22" viewBox="0 0 22 22"><path d="M11 1l3 7h7l-6 5 3 8-7-5-7 5 3-8-6-5h7z" fill="#fdb813" /></svg>
        </InputBar>
        <Watermark>CSDN @子衿12138</Watermark>
      </StatusBar>
    </Shell>
  </>
)

export default App
